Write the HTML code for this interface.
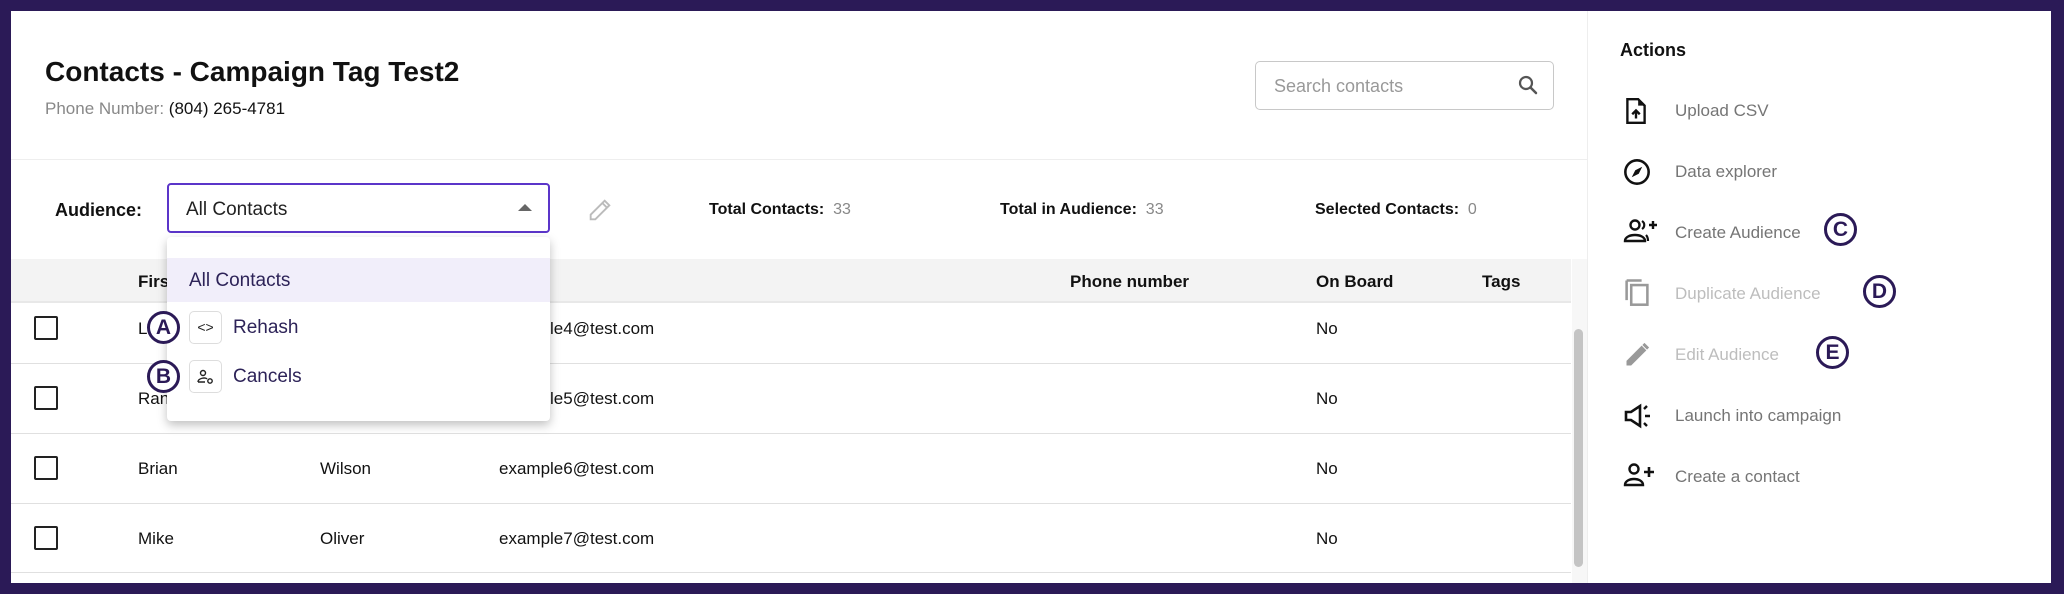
<!DOCTYPE html>
<html><head><meta charset="utf-8"><style>
*{box-sizing:border-box;margin:0;padding:0}
body{width:2064px;height:594px;background:#2b1a57;position:relative;overflow:hidden;font-family:"Liberation Sans",sans-serif;color:#111}
.abs{position:absolute}
.main{position:absolute;left:11px;top:11px;width:2040px;height:572px;background:#fff;overflow:hidden}
.t{position:absolute;white-space:nowrap}
.cb{position:absolute;left:23px;width:24px;height:24px;border:2.5px solid #222;border-radius:2px}
.hline{position:absolute;left:0;width:1560px;height:1px;background:#e0e0e0}
.badge{position:absolute;width:33px;height:33px;border:3px solid #2b1a57;border-radius:50%;color:#2b1a57;font-weight:bold;font-size:21px;line-height:27px;text-align:center;background:#fff}
.act{position:absolute;left:1664px;font-size:17px;color:#757575}
.ico{position:absolute;left:1612px}
</style></head><body>
<div class="main">
  <div class="t" style="left:34px;top:45px;font-size:28px;font-weight:bold">Contacts - Campaign Tag Test2</div>
  <div class="t" style="left:34px;top:88px;font-size:17px;color:#888">Phone Number: <span style="color:#111">(804) 265-4781</span></div>
  <div class="abs" style="left:1244px;top:50px;width:299px;height:49px;border:1px solid #c8c8c8;border-radius:5px"></div>
  <div class="t" style="left:1263px;top:65px;font-size:18px;color:#999">Search contacts</div>
  <svg class="abs" style="left:1505px;top:62px" width="24" height="24" viewBox="0 0 24 24"><circle cx="10" cy="10" r="6" fill="none" stroke="#555" stroke-width="2.2"/><path d="M14.5 14.5 L20 20" stroke="#555" stroke-width="2.5" stroke-linecap="round"/></svg>
  <div class="abs" style="left:0;top:148px;width:1576px;height:1px;background:#eee"></div>
  <div class="abs" style="left:1576px;top:0;width:1px;height:572px;background:#eee"></div>

  <div class="t" style="left:44px;top:189px;font-size:18px;font-weight:bold">Audience:</div>
  <div class="abs" style="left:156px;top:172px;width:383px;height:50px;border:2.5px solid #5b35c9;border-radius:4px"></div>
  <div class="t" style="left:175px;top:188px;font-size:19px;color:#222">All Contacts</div>
  <svg class="abs" style="left:507px;top:192px" width="14" height="10"><path d="M0 8 L7 1 L14 8Z" fill="#666"/></svg>
  <svg class="abs" style="left:575px;top:185px" width="28" height="28" viewBox="0 0 24 24"><path d="M4 20 L4 16 L16 4 L20 8 L8 20 Z M14 6 L18 10" fill="none" stroke="#bbb" stroke-width="1.6"/></svg>
  <div class="t" style="left:698px;top:190px;font-size:16px;font-weight:bold">Total Contacts: <span style="font-weight:normal;color:#888">&nbsp;33</span></div>
  <div class="t" style="left:989px;top:190px;font-size:16px;font-weight:bold">Total in Audience: <span style="font-weight:normal;color:#888">&nbsp;33</span></div>
  <div class="t" style="left:1304px;top:190px;font-size:16px;font-weight:bold">Selected Contacts: <span style="font-weight:normal;color:#888">&nbsp;0</span></div>

  <div class="abs" style="left:0;top:248px;width:1560px;height:44px;background:#f3f3f3;border-bottom:2px solid #e8e8e8"></div>
  <div class="t" style="left:127px;top:261px;font-size:17px;font-weight:bold">First name</div>
  <div class="t" style="left:1059px;top:261px;font-size:17px;font-weight:bold">Phone number</div>
  <div class="t" style="left:1305px;top:261px;font-size:17px;font-weight:bold">On Board</div>
  <div class="t" style="left:1471px;top:261px;font-size:17px;font-weight:bold">Tags</div>

  <div class="cb" style="top:305px"></div>
  <div class="t" style="left:127px;top:308px;font-size:17px">Lisa</div>
  <div class="t" style="left:488px;top:308px;font-size:17px">example4@test.com</div>
  <div class="t" style="left:1305px;top:308px;font-size:17px">No</div>
  <div class="hline" style="top:352px"></div>
  <div class="cb" style="top:375px"></div>
  <div class="t" style="left:127px;top:378px;font-size:17px">Randy</div>
  <div class="t" style="left:488px;top:378px;font-size:17px">example5@test.com</div>
  <div class="t" style="left:1305px;top:378px;font-size:17px">No</div>
  <div class="hline" style="top:422px"></div>
  <div class="cb" style="top:445px"></div>
  <div class="t" style="left:127px;top:448px;font-size:17px">Brian</div>
  <div class="t" style="left:309px;top:448px;font-size:17px">Wilson</div>
  <div class="t" style="left:488px;top:448px;font-size:17px">example6@test.com</div>
  <div class="t" style="left:1305px;top:448px;font-size:17px">No</div>
  <div class="hline" style="top:492px"></div>
  <div class="cb" style="top:515px"></div>
  <div class="t" style="left:127px;top:518px;font-size:17px">Mike</div>
  <div class="t" style="left:309px;top:518px;font-size:17px">Oliver</div>
  <div class="t" style="left:488px;top:518px;font-size:17px">example7@test.com</div>
  <div class="t" style="left:1305px;top:518px;font-size:17px">No</div>
  <div class="hline" style="top:561px"></div>
  <div class="abs" style="left:1561px;top:248px;width:15px;height:324px;background:#f7f7f7"></div>
  <div class="abs" style="left:1563px;top:318px;width:9px;height:238px;background:#c4c4c4;border-radius:5px"></div>

  <div class="abs" style="left:156px;top:226px;width:383px;height:184px;background:#fff;border-radius:4px;box-shadow:0 4px 10px rgba(0,0,0,.25)"></div>
  <div class="abs" style="left:156px;top:247px;width:383px;height:44px;background:#f1eefa"></div>
  <div class="t" style="left:178px;top:259px;font-size:19px;color:#2d2358">All Contacts</div>
  <div class="abs" style="left:178px;top:300px;width:33px;height:33px;border:1px solid #ddd;border-radius:5px;font-size:14px;text-align:center;line-height:31px;color:#222">&lt;&gt;</div>
  <div class="t" style="left:222px;top:306px;font-size:19px;color:#2d2358">Rehash</div>
  <div class="abs" style="left:178px;top:349px;width:33px;height:33px;border:1px solid #ddd;border-radius:5px"></div>
  <svg class="abs" style="left:186px;top:357px" width="18" height="18" viewBox="0 0 18 18"><circle cx="6" cy="5" r="2.5" fill="none" stroke="#222" stroke-width="1.4"/><path d="M1 14 C1 10 9 9 10 11 M1 14 L8 14" fill="none" stroke="#222" stroke-width="1.4"/><circle cx="13" cy="13" r="2.2" fill="none" stroke="#222" stroke-width="1.4"/></svg>
  <div class="t" style="left:222px;top:355px;font-size:19px;color:#2d2358">Cancels</div>
  <div class="badge" style="left:136px;top:300px">A</div>
  <div class="badge" style="left:136px;top:349px">B</div>

  <div class="t" style="left:1609px;top:29px;font-size:18px;font-weight:bold">Actions</div>
  <svg class="ico" style="top:86px" width="26" height="28" viewBox="0 0 24 26"><path d="M4 2 H14 L20 8 V24 H4 Z" fill="none" stroke="#111" stroke-width="2.2"/><path d="M14 2 V8 H20" fill="#111"/><path d="M12 20 V13 M8.5 16 L12 12.5 L15.5 16" fill="none" stroke="#111" stroke-width="2.2"/></svg>
  <div class="act" style="top:90px">Upload CSV</div>
  <svg class="ico" style="top:147px" width="28" height="28" viewBox="0 0 24 24"><circle cx="12" cy="12" r="10" fill="none" stroke="#111" stroke-width="2.2"/><path d="M16.5 7.5 L13.5 13.5 L7.5 16.5 L10.5 10.5Z" fill="#111"/></svg>
  <div class="act" style="top:151px">Data explorer</div>
  <svg class="ico" style="top:206px" width="34" height="28" viewBox="0 0 34 28"><circle cx="12" cy="8" r="4.5" fill="none" stroke="#111" stroke-width="2.4"/><path d="M2 24 C2 16 22 16 22 24 Z" fill="none" stroke="#111" stroke-width="2.4"/><path d="M19 4 C22 6 22 10 19 12 M23 18 C25 20 25 22 25 24" fill="none" stroke="#111" stroke-width="2.2"/><path d="M30 4 V12 M26 8 H34" stroke="#111" stroke-width="2.4"/></svg>
  <div class="act" style="top:212px">Create Audience</div>
  <div class="badge" style="left:1813px;top:202px">C</div>
  <svg class="ico" style="top:266px" width="28" height="30" viewBox="0 0 24 26"><path d="M3 3 V20 M3 3 H16" fill="none" stroke="#999" stroke-width="2.2"/><rect x="7" y="7" width="14" height="17" fill="none" stroke="#999" stroke-width="2.2"/></svg>
  <div class="act" style="top:273px;color:#bdbdbd">Duplicate Audience</div>
  <div class="badge" style="left:1852px;top:264px">D</div>
  <svg class="ico" style="top:330px" width="28" height="28" viewBox="0 0 24 24"><path d="M3 21 L3 17 L16 4 L20 8 L7 21 Z" fill="#999"/><path d="M17.5 2.5 L21.5 6.5" stroke="#999" stroke-width="2.5"/></svg>
  <div class="act" style="top:334px;color:#bdbdbd">Edit Audience</div>
  <div class="badge" style="left:1805px;top:325px">E</div>
  <svg class="ico" style="top:390px" width="30" height="30" viewBox="0 0 30 30"><path d="M3 11 H8 L17 5 V25 L8 19 H3 Z" fill="none" stroke="#111" stroke-width="2.6"/><path d="M21 8 L24 5 M22 15 H27 M21 22 L24 25" stroke="#111" stroke-width="2.4"/></svg>
  <div class="act" style="top:395px">Launch into campaign</div>
  <svg class="ico" style="top:450px" width="32" height="28" viewBox="0 0 32 28"><circle cx="11" cy="8" r="4.5" fill="none" stroke="#111" stroke-width="2.4"/><path d="M2 24 C2 16 20 16 20 24 Z" fill="none" stroke="#111" stroke-width="2.4"/><path d="M26 6 V16 M21 11 H31" stroke="#111" stroke-width="2.6"/></svg>
  <div class="act" style="top:456px">Create a contact</div>
</div>
</body></html>
